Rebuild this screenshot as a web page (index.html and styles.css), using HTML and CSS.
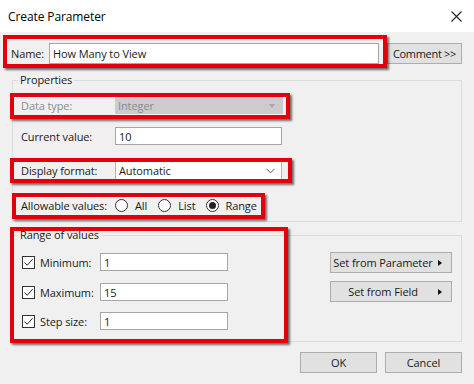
FILE: index.html
```html
<!DOCTYPE html>
<html lang="en">
<head>
    <meta charset="UTF-8">
    <title>Create Parameter</title>
    <link rel="stylesheet" href="styles.css">
</head>
<body>
    <div class="window">
        <div class="titlebar">
            <span class="title">Create Parameter</span>
            <svg class="close" width="11" height="11" viewBox="0 0 11 11">
                <path d="M0.5 0.5 L10.5 10.5 M10.5 0.5 L0.5 10.5" stroke="#222" stroke-width="1.1" fill="none"/>
            </svg>
        </div>

        <div class="name-row">
            <span class="name-lbl">Name:</span>
            <div class="textbox name-box">How Many to View</div>
            <button class="btn comment">Comment &gt;&gt;</button>
        </div>

        <fieldset class="group props">
            <legend>Properties</legend>
            <div class="row row-type disabled">
                <span class="lbl">Data type:</span>
                <div class="combo combo-off">Integer<span class="tri"></span></div>
            </div>
            <div class="row row-current">
                <span class="lbl">Current value:</span>
                <div class="textbox current-box">10</div>
            </div>
            <div class="row row-format">
                <span class="lbl">Display format:</span>
                <div class="combo combo-on">Automatic
                    <svg class="chev" width="9" height="6" viewBox="0 0 9 6"><path d="M0.5 0.8 L4.5 4.8 L8.5 0.8" stroke="#555" stroke-width="1" fill="none"/></svg>
                </div>
            </div>
            <div class="row row-allow">
                <span class="lbl">Allowable values:</span>
                <span class="radio"></span><span class="opt opt-all">All</span>
                <span class="radio"></span><span class="opt opt-list">List</span>
                <span class="radio checked"></span><span class="opt">Range</span>
            </div>
        </fieldset>

        <fieldset class="group range">
            <legend>Range of values</legend>
            <div class="range-body">
                <div class="range-rows">
                    <div class="rrow">
                        <span class="check"><svg width="11" height="11" viewBox="0 0 11 11"><path d="M1.5 5.5 L4.2 8.3 L9.6 2.2" stroke="#222" stroke-width="1" fill="none"/></svg></span>
                        <span class="rlbl">Minimum:</span>
                        <div class="textbox rbox">1</div>
                    </div>
                    <div class="rrow rrow-2">
                        <span class="check"><svg width="11" height="11" viewBox="0 0 11 11"><path d="M1.5 5.5 L4.2 8.3 L9.6 2.2" stroke="#222" stroke-width="1" fill="none"/></svg></span>
                        <span class="rlbl">Maximum:</span>
                        <div class="textbox rbox">15</div>
                    </div>
                    <div class="rrow rrow-3">
                        <span class="check"><svg width="11" height="11" viewBox="0 0 11 11"><path d="M1.5 5.5 L4.2 8.3 L9.6 2.2" stroke="#222" stroke-width="1" fill="none"/></svg></span>
                        <span class="rlbl">Step size:</span>
                        <div class="textbox rbox">1</div>
                    </div>
                </div>
                <div class="side">
                    <button class="btn side-btn">Set from Parameter<span class="arrow"></span></button>
                    <button class="btn side-btn">Set from Field<span class="arrow"></span></button>
                </div>
            </div>
        </fieldset>

        <div class="footer">
            <button class="btn foot-btn">OK</button>
            <button class="btn foot-btn">Cancel</button>
        </div>

        <!-- red highlight boxes drawn over the dialog -->
        <div class="mark mark-name"></div>
        <div class="mark mark-type"></div>
        <div class="mark mark-format"></div>
        <div class="mark mark-allow"></div>
        <div class="mark mark-range"></div>
    </div>
</body>
</html>
```

FILE: styles.css
```css
* {
    box-sizing: border-box;
}

body {
    margin: 0;
    padding: 0;
    background: #f0f0f0;
    font-family: "Open Sans", "Noto Sans", sans-serif;
    font-size: 11px;
    letter-spacing: -0.1px;
    color: #1a1a1a;
}

.window {
    position: relative;
    width: 474px;
    height: 384px;
    background: #f0f0f0;
    overflow: hidden;
}

.titlebar {
    height: 32px;
    background: #fff;
    display: flex;
    align-items: center;
    justify-content: space-between;
    padding: 0 12px 0 8px;
}

.title {
    font-size: 12px;
    color: #000;
}

.close {
    margin-top: 1px;
}

.textbox {
    background: #fff;
    border: 1px solid #a6a6a6;
    display: flex;
    align-items: center;
    padding-left: 3px;
}

.btn {
    font: inherit;
    letter-spacing: inherit;
    color: #1a1a1a;
    background: #e1e1e1;
    border: 1px solid #adadad;
    padding: 0;
    height: 21px;
}

/* name row */
.name-row {
    display: flex;
    align-items: center;
    height: 21px;
    margin-top: 11px;
    padding-left: 11px;
}

.name-lbl {
    width: 38px;
}

.name-box {
    width: 330px;
    height: 21px;
}

.comment {
    width: 75px;
    margin-left: 8px;
    letter-spacing: -0.3px;
    white-space: nowrap;
}

/* group boxes */
.group {
    margin: 8px 12px 0;
    border: 1px solid #dcdcdc;
    padding: 7px 8px 6px;
    min-width: 0;
}

.group legend {
    padding: 0 2px;
    margin-left: -3px;
    line-height: 16px;
    height: 16px;
}

.row {
    display: flex;
    align-items: center;
    height: 20px;
}

.row-current { margin-top: 11px; }
.row-format { margin-top: 14px; }
.row-allow { margin-top: 15px; }

.lbl {
    width: 94px;
}

.disabled .lbl {
    color: #8c8c8c;
}

.combo {
    position: relative;
    display: flex;
    align-items: center;
    padding-left: 3px;
}

.combo-off {
    width: 168px;
    height: 17px;
    background: #cccccc;
    color: #8a8a8a;
}

.tri {
    position: absolute;
    right: 8px;
    top: 7px;
    border-left: 3px solid transparent;
    border-right: 3px solid transparent;
    border-top: 4px solid #a8a8a8;
}

.current-box {
    width: 167px;
    height: 18px;
}

.combo-on {
    width: 167px;
    height: 19px;
    background: #fff;
    border: 1px solid #b4b4b4;
}

.chev {
    position: absolute;
    right: 6px;
    top: 6px;
}

.radio {
    width: 13px;
    height: 13px;
    border: 1px solid #333;
    border-radius: 50%;
    background: #fff;
    position: relative;
}

.radio.checked::after {
    content: '';
    position: absolute;
    left: 2px;
    top: 2px;
    width: 7px;
    height: 7px;
    border-radius: 50%;
    background: #222;
}

.opt {
    margin-left: 7px;
}

.opt-all { margin-right: 11px; }
.opt-list { margin-right: 10px; }

/* range of values */
.range {
    margin-top: 5px;
    padding: 10px 8px 11px;
}

.range-body {
    display: flex;
    justify-content: space-between;
    align-items: flex-start;
}

.rrow {
    display: flex;
    align-items: center;
    height: 18px;
}

.rrow-2 { margin-top: 12px; }
.rrow-3 { margin-top: 11px; }

.check {
    width: 13px;
    height: 13px;
    margin-left: 1px;
    border: 1px solid #333;
    background: #fff;
    display: flex;
}

.rlbl {
    width: 60px;
    margin-left: 5px;
}

.rbox {
    width: 128px;
    height: 18px;
}

.side {
    display: flex;
    flex-direction: column;
    gap: 8px;
    margin-top: -1px;
    margin-right: 1px;
}

.side-btn {
    position: relative;
    width: 122px;
    padding-right: 16px;
}

.arrow {
    position: absolute;
    right: 9px;
    top: 7px;
    border-top: 3px solid transparent;
    border-bottom: 3px solid transparent;
    border-left: 4px solid #111;
}

.footer {
    display: flex;
    justify-content: flex-end;
    gap: 8px;
    margin-top: 10px;
    padding-right: 12px;
}

.foot-btn {
    width: 77px;
}

/* red annotation boxes */
.mark {
    position: absolute;
    border: 4px solid #e1000c;
    box-shadow: 2px 2px 2px rgba(0, 0, 0, 0.55);
    pointer-events: none;
}

.mark-name { left: 3px; top: 35px; width: 384px; height: 33px; }
.mark-type { left: 10px; top: 93px; width: 280px; height: 26px; }
.mark-format { left: 10px; top: 158px; width: 282px; height: 25px; }
.mark-allow { left: 12px; top: 193px; width: 253px; height: 26px; }
.mark-range { left: 10px; top: 227px; width: 278px; height: 116px; }
```
